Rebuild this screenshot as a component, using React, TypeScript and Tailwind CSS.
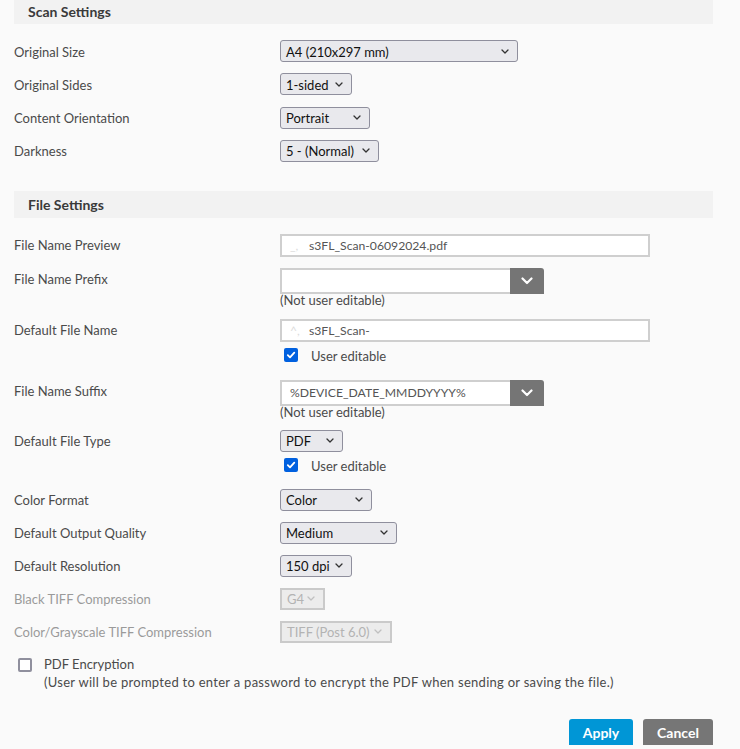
import React from "react";

const font = { fontFamily: "Lato, 'Noto Sans', sans-serif" };

function Chevron({ className = "" }: { className?: string }) {
  return (
    <svg viewBox="0 0 8 5" className={`h-[5px] w-[8px] ${className}`} fill="none">
      <path d="M1 1l3 3 3-3" stroke="currentColor" strokeWidth="1.3" strokeLinecap="round" strokeLinejoin="round" />
    </svg>
  );
}

function Select({ value, width, disabled = false }: { value: string; width: string; disabled?: boolean }) {
  return (
    <div
      className={`flex h-[22px] items-center justify-between pl-[5px] pr-[8px] text-[13px] leading-[16px] ${width} ${
        disabled
          ? "border-2 border-[#cacaca] bg-[#ececec] text-[#b3b3b3]"
          : "rounded-[3px] border border-[#8f8f9d] bg-[#e9e9ed] text-[#111]"
      }`}
    >
      <span className="whitespace-nowrap pt-[1px]">{value}</span>
      <Chevron className={disabled ? "text-[#c0c0c0]" : "text-[#333]"} />
    </div>
  );
}

function Combo({ value }: { value: string }) {
  return (
    <div className="flex h-[26px] w-[264px]">
      <div className="flex flex-1 items-center border-2 border-r-0 border-[#cfcfcf] bg-white pl-[8px] pt-[1px] text-[12.2px] text-[#555]">
        {value}
      </div>
      <div className="flex w-[34px] items-center justify-center rounded-tr-[3px] bg-[#757575]">
        <svg viewBox="0 0 12 8" className="h-[8px] w-[12px]" fill="none">
          <path d="M1.5 1.5L6 6l4.5-4.5" stroke="white" strokeWidth="2.2" strokeLinecap="round" strokeLinejoin="round" />
        </svg>
      </div>
    </div>
  );
}

function TextInput({ faint, rest }: { faint: string; rest: string }) {
  return (
    <div className="flex h-[23px] w-[370px] items-center border-2 border-[#cfcfcf] bg-white pl-[8px] pt-[1px] text-[12.2px] text-[#555]">
      <span className="w-[19px] text-[#dcdcdc]">{faint}</span>
      {rest}
    </div>
  );
}

function Checkbox({ checked }: { checked: boolean }) {
  return checked ? (
    <div className="flex h-[14px] w-[14px] items-center justify-center rounded-[2px] bg-[#0060df]">
      <svg viewBox="0 0 10 10" className="h-[10px] w-[10px]" fill="none">
        <path d="M1.8 5.2l2.2 2.2 4.3-4.8" stroke="white" strokeWidth="1.8" strokeLinecap="round" strokeLinejoin="round" />
      </svg>
    </div>
  ) : (
    <div className="h-[14px] w-[14px] rounded-[2px] border-2 border-[#8f8f9d] bg-white" />
  );
}

function Row({ label, children, disabled = false }: { label: string; children: React.ReactNode; disabled?: boolean }) {
  return (
    <div className="flex items-start">
      <div
        className={`flex h-[22px] w-[266px] shrink-0 items-center pt-[1px] text-[13px] leading-[16px] ${
          disabled ? "text-[#9a9a9a]" : "text-[#4a4a4a]"
        }`}
      >
        {label}
      </div>
      <div>{children}</div>
    </div>
  );
}

function Header({ title, h }: { title: string; h: string }) {
  return (
    <div className={`flex items-center bg-[#f2f2f2] pl-[14px] text-[14px] font-bold text-[#3a3a3a] ${h}`}>
      {title}
    </div>
  );
}

function Editable() {
  return (
    <div className="mt-[5px] flex h-[16px] items-center pl-[4px]">
      <Checkbox checked />
      <span className="ml-[13px] pt-[2px] text-[13px] leading-[16px] text-[#4a4a4a]">User editable</span>
    </div>
  );
}

function NotEditable() {
  return <div className="mt-[-1px] h-[14px] text-[13px] leading-[14px] text-[#4a4a4a]">(Not user editable)</div>;
}

export default function App() {
  return (
    <div className="min-h-[749px] w-[740px] bg-[#fafafa] pl-[14px] pr-[27px]" style={font}>
      <Header title="Scan Settings" h="h-[24px] pb-[1px]" />
      <div className="mt-[16px] flex flex-col gap-[11.3px]">
        <Row label="Original Size"><Select value="A4 (210x297 mm)" width="w-[238px]" /></Row>
        <Row label="Original Sides"><Select value="1-sided" width="w-[72px]" /></Row>
        <Row label="Content Orientation"><Select value="Portrait" width="w-[90px]" /></Row>
        <Row label="Darkness"><Select value="5 - (Normal)" width="w-[99px]" /></Row>
      </div>

      <div className="mt-[29px]">
        <Header title="File Settings" h="h-[27px]" />
      </div>

      <div className="mt-[16px] flex flex-col">
        <Row label="File Name Preview">
          <TextInput faint="_," rest="s3FL_Scan-06092024.pdf" />
        </Row>
        <div className="mt-[11px]">
          <Row label="File Name Prefix">
            <Combo value="" />
            <NotEditable />
          </Row>
        </div>
        <div className="mt-[12px]">
          <Row label="Default File Name">
            <TextInput faint="^," rest="s3FL_Scan-" />
            <Editable />
          </Row>
        </div>
        <div className="mt-[17px]">
          <Row label="File Name Suffix">
            <Combo value="%DEVICE_DATE_MMDDYYYY%" />
            <NotEditable />
          </Row>
        </div>
        <div className="mt-[11px]">
          <Row label="Default File Type">
            <Select value="PDF" width="w-[63px]" />
            <Editable />
          </Row>
        </div>
        <div className="mt-[16px] flex flex-col gap-[11px]">
          <Row label="Color Format"><Select value="Color" width="w-[92px]" /></Row>
          <Row label="Default Output Quality"><Select value="Medium" width="w-[117px]" /></Row>
          <Row label="Default Resolution"><Select value="150 dpi" width="w-[72px]" /></Row>
          <Row label="Black TIFF Compression" disabled><Select value="G4" width="w-[45px]" disabled /></Row>
          <Row label="Color/Grayscale TIFF Compression" disabled>
            <Select value="TIFF (Post 6.0)" width="w-[112px]" disabled />
          </Row>
        </div>
      </div>

      <div className="mt-[12px] flex items-start pl-[4px]">
        <div className="mt-[3px]"><Checkbox checked={false} /></div>
        <div className="ml-[12px] text-[13px] leading-[18px] text-[#4a4a4a]">
          <div>PDF Encryption</div>
          <div className="tracking-[0.28px]">
            (User will be prompted to enter a password to encrypt the PDF when sending or saving the file.)
          </div>
        </div>
      </div>

      <div className="mt-[28px] flex justify-end gap-[10px]">
        <button className="h-[26px] w-[64px] rounded-t-[3px] bg-[#0096d6] pt-[1px] text-[14px] font-bold text-white">Apply</button>
        <button className="h-[26px] w-[70px] rounded-t-[3px] bg-[#767676] pt-[1px] text-[14px] font-bold text-white">Cancel</button>
      </div>
    </div>
  );
}
